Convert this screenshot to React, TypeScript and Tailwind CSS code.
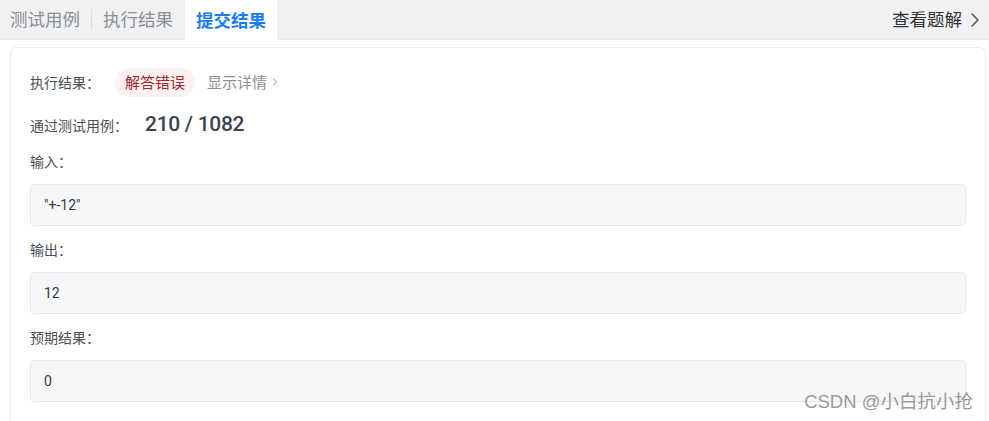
import { ChevronRight } from 'lucide-react'

const FONT = '[font-family:"Noto_Sans_CJK_SC","Noto_Sans",sans-serif]'

function Field({ label, value }: { label: string; value: string }) {
  return (
    <div>
      <div className="h-[24px] flex items-center text-[14px] text-[#4a4f57]">{label}</div>
      <div className="mt-[11px] h-[42px] rounded-[4px] border border-[#e6e8ec] bg-[#f6f7f9] px-[13px] flex items-center text-[14px] text-[#333a45] [font-family:Roboto,sans-serif]">
        {value}
      </div>
    </div>
  )
}

export default function App() {
  return (
    <div className={`w-[989px] h-[421px] overflow-hidden bg-white relative ${FONT}`}>
      <div className="h-[40px] bg-[#f0f1f3] flex items-stretch justify-between border-b border-[#e8e9ec]">
        <div className="flex items-stretch text-[17.5px]">
          <div className="pl-[10px] pr-[11px] flex items-center text-[#8c8f94]">测试用例</div>
          <div className="w-px bg-[#dcdde0] my-[9px]" />
          <div className="pl-[11px] pr-[12px] flex items-center text-[#8c8f94]">执行结果</div>
          <div className="w-[92px] bg-white flex items-center justify-center font-bold text-[#1a7cf4] -mb-px">提交结果</div>
        </div>
        <div className="flex items-center pr-[2px] text-[17.5px] text-[#333]">
          <span>查看题解</span>
          <ChevronRight className="ml-[1px] w-[24px] h-[24px] text-[#555]" strokeWidth={1.5} />
        </div>
      </div>

      <div className="mt-[7px] ml-[10px] mr-[3px] rounded-t-[6px] border border-[#ececee] border-b-0 px-[19px] pt-[19px] h-[400px]">
        <div className="flex items-center h-[30px]">
          <span className="text-[14px] text-[#4a4f57] w-[85px]">执行结果：</span>
          <span className="h-[29px] px-[10px] rounded-full bg-[#fdf1f2] text-[#a1252a] text-[15px] flex items-center">解答错误</span>
          <span className="ml-[12px] text-[15px] text-[#8c8f94] flex items-center">
            显示详情
            <ChevronRight className="ml-[2px] w-[12px] h-[12px]" strokeWidth={2} />
          </span>
        </div>
        <div className="flex items-center h-[30px] mt-[13px]">
          <span className="text-[14px] text-[#4a4f57] w-[115px]">通过测试用例：</span>
          <span className="text-[21px] text-[#3b4350] [font-family:Roboto,sans-serif] font-medium tracking-[-0.3px] whitespace-pre">210 / 1082</span>
        </div>
        <div className="mt-[9px] flex flex-col gap-[11px]">
          <Field label="输入：" value={'"+-12"'} />
          <Field label="输出：" value="12" />
          <Field label="预期结果：" value="0" />
        </div>
      </div>

      <div className="absolute right-[16px] top-[388px] text-[18.5px] text-[#9a9a9a] [font-family:'Liberation_Sans','Noto_Sans_CJK_SC',sans-serif]">
        CSDN @小白抗小抢
      </div>
    </div>
  )
}
